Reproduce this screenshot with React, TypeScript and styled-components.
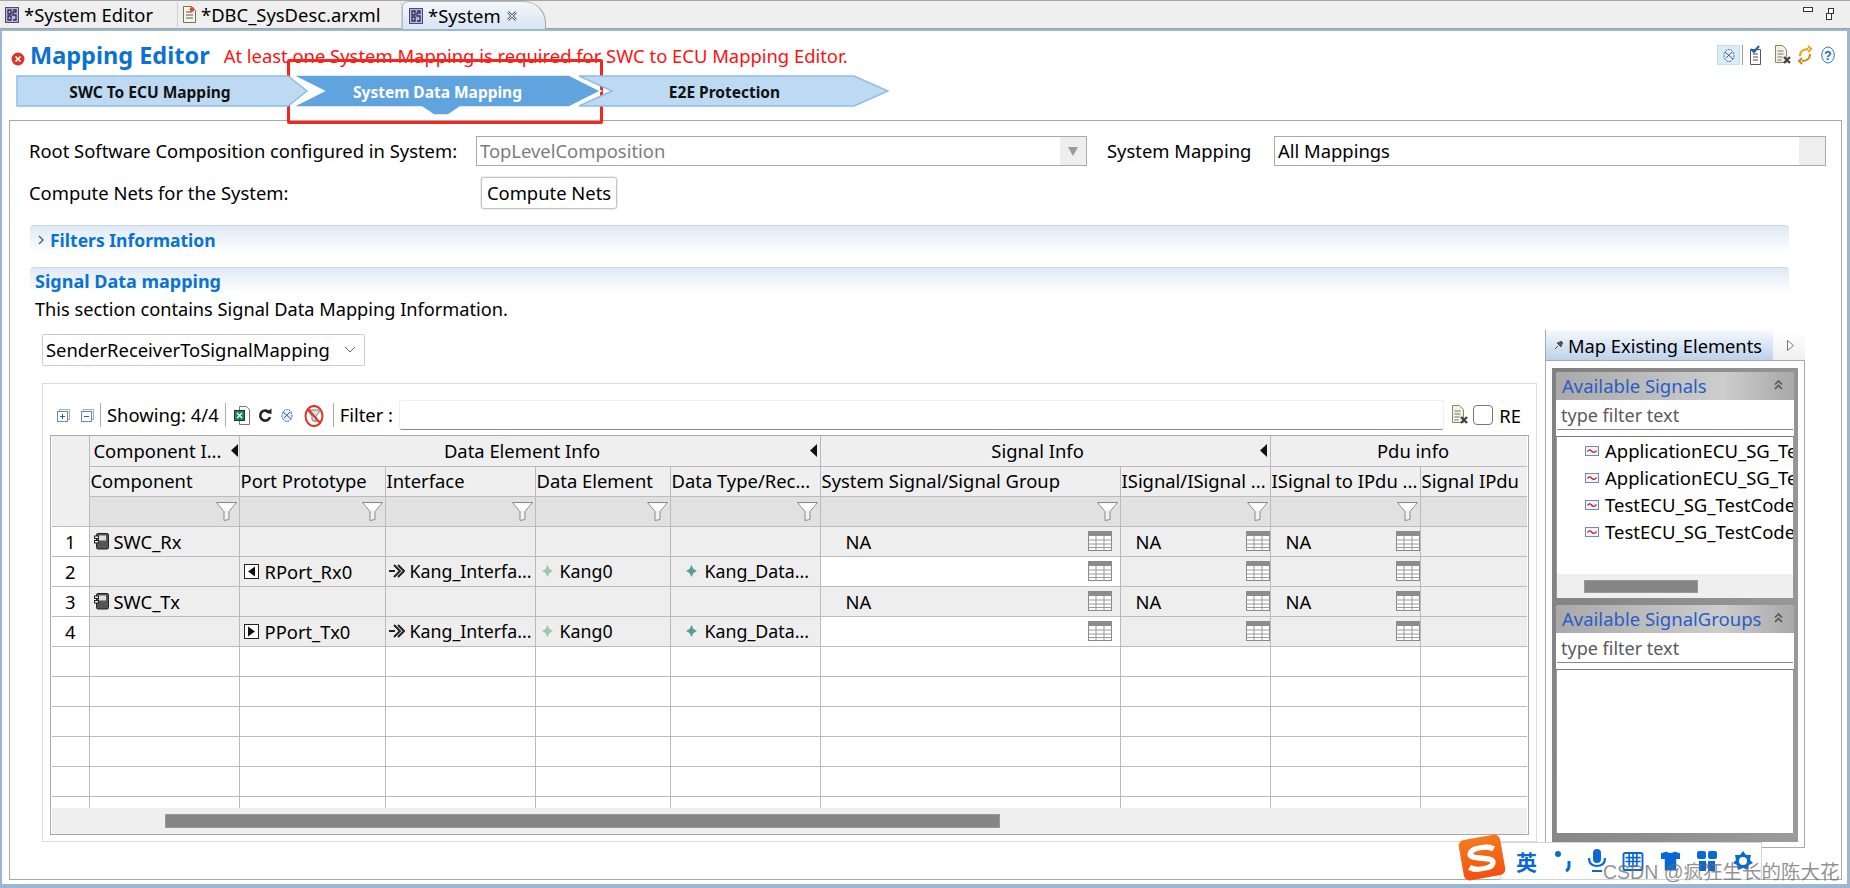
import React from "react";
import styled, { createGlobalStyle } from "styled-components";

const Global = createGlobalStyle`
  html, body { margin: 0; padding: 0; background: #fff; }
  body { font-family: "Noto Sans", "Open Sans", "Liberation Sans", "Noto Sans CJK SC", sans-serif; font-size: 18.4px; color: #000; }
  * { box-sizing: border-box; }
`;

const Page = styled.div`
  position: relative; width: 1850px; height: 888px; overflow: hidden; display: flex; flex-direction: column; background: #fff;
`;
const TabBar = styled.div`
  height: 29px; flex: none; display: flex; background: #efefef; border-top: 1px solid #a8a8a8; position: relative;
`;
const Tab = styled.div<{ $w: number; $active?: boolean }>`
  width: ${p => p.$w}px; height: 28px; display: flex; align-items: center; gap: 5px; padding-left: ${p => p.$active ? 6 : 5}px;
  white-space: nowrap; line-height: 28px;
  ${p => p.$active ? `
    background: linear-gradient(#f4f7fb, #d6e4f2);
    border-radius: 6px 22px 0 0;
    border-top: 1px solid #b9b9b9; border-left: 1px solid #b9b9b9; border-right: 1px solid #a8a8a8;
  ` : `border-right: 1px solid #d0d0d0; border-radius: 0 4px 0 0; border-bottom: 1px solid #a0a0a0;`}
`;
const TabSpacer = styled.div`
  flex: 1; border-bottom: 1px solid #a0a0a0; height: 28px; display: flex; justify-content: flex-end; align-items: flex-start; gap: 13px; padding: 6px 16px 0 0;
`;
const Editor = styled.div`
  flex: 1; min-height: 0; display: flex; flex-direction: column; border-top: 2px solid #9ab8d6; border-left: 2px solid #9ab8d6; border-right: 3px solid #9ab8d6; border-bottom: 4px solid #9ab8d6;
`;
const TitleRow = styled.div`
  height: 44px; flex: none; display: flex; align-items: center; padding: 4px 12px 0 9px;
`;
const Title = styled.div`
  font-size: 23.5px; font-weight: 700; color: #0a73cf; margin-left: 5px; white-space: nowrap;
`;
const ErrorText = styled.div`
  color: #ff1010; margin-left: 14px; white-space: nowrap;
`;
const HeadTools = styled.div`
  margin-left: auto; display: flex; align-items: center;
`;
const ToolToggle = styled.div`
  width: 23px; height: 20px; background: #dcebf8; border: 1px solid #c4dcf0; display: flex; align-items: center; justify-content: center;
`;
const ToolSep = styled.div`
  width: 1px; height: 20px; background: #999; margin-left: 2px;
`;
const Steps = styled.div`
  height: 45px; flex: none; padding-left: 14px; display: flex; align-items: flex-start;
`;
const Step = styled.div<{ $w: number; $ml?: number; $pr: number; $active?: boolean; $z: number }>`
  position: relative; z-index: ${p => p.$z}; width: ${p => p.$w}px; height: 32px; margin-left: ${p => p.$ml ?? 0}px; padding-right: ${p => p.$pr}px; padding-top: 2px;
  display: flex; align-items: center; justify-content: center; font-size: 15.5px; font-weight: 700;
  color: ${p => p.$active ? "#fff" : "#111"};
  svg { position: absolute; left: 0; top: 0; overflow: visible; }
  span { position: relative; }
`;
const Panel = styled.div`
  flex: 1; min-height: 0; margin: 0 5px 4px 7px; border: 1px solid #aaa; padding-top: 15px; display: flex; flex-direction: column;
`;
const FormRow = styled.div<{ $mt?: number }>`
  display: flex; align-items: center; padding: 0 15px 0 19px; margin-top: ${p => p.$mt ?? 0}px; flex: none;
`;
const FormLabel = styled.div<{ $w?: number; $ml?: number }>`
  width: ${p => p.$w ? `${p.$w}px` : "auto"}; margin-left: ${p => p.$ml ?? 0}px; white-space: nowrap; flex: none; padding-bottom: 2px;
`;
const Combo = styled.div<{ $w?: number; $disabled?: boolean }>`
  width: ${p => p.$w ? `${p.$w}px` : "auto"}; flex: ${p => p.$w ? "none" : 1}; height: 30px; border: 1px solid #aaa; display: flex; align-items: center; justify-content: space-between; padding-left: 3px;
  color: ${p => p.$disabled ? "#7d7d7d" : "#000"};
  > span { padding-bottom: 2px; }
`;
const ComboBtn = styled.div`
  width: 26px; height: 28px; background: #eee; display: flex; align-items: center; justify-content: center;
`;
const Button = styled.div`
  width: 136px; height: 32px; border: 1px solid #c4c4c4; border-radius: 3px; background: #fff; box-shadow: 0 0 0 1px #eee; display: flex; align-items: center; justify-content: center; margin-left: 1px; padding-bottom: 2px;
`;
const SectionHead = styled.div<{ $mt: number; $h: number }>`
  margin: ${p => p.$mt}px 52px 0 20px; height: ${p => p.$h}px; flex: none; padding: 2px 0 0 ${p => p.$h === 27 ? 8 : 5}px; display: flex; align-items: center; gap: 6px;
  font-weight: 700; font-size: ${p => p.$h === 27 ? 17.5 : 18}px; color: #0a73cf; border-top: 1px solid #c9d8e8; border-radius: 4px 4px 0 0;
  background: linear-gradient(#dfe9f4, #fdfeff);
`;
const Desc = styled.div`
  height: 38px; flex: none; padding-left: 25px; display: flex; align-items: center; padding-bottom: 4px; font-size: 18.2px;
`;
const Body = styled.div`
  display: flex; gap: 8px; padding-left: 32px; flex: none;
`;
const LeftCol = styled.div`
  width: 1495px; padding-top: 4px; flex: none;
`;
const SelectBox = styled.div`
  width: 323px; height: 32px; border: 1px solid #ccc; border-radius: 2px; display: flex; align-items: center; justify-content: space-between; padding: 0 8px 2px 3px; white-space: nowrap;
`;
const TablePanel = styled.div`
  margin-top: 17px; height: 459px; border: 1px solid #ddd; display: flex; flex-direction: column;
`;
const Toolbar = styled.div`
  margin-top: 16px; height: 30px; display: flex; align-items: center; padding: 0 15px 0 14px; flex: none;
`;
const TI = styled.div<{ $ml?: number; $w?: number; $text?: boolean }>`
  margin-left: ${p => p.$ml ?? 0}px; ${p => p.$w ? `width:${p.$w}px;` : ""} flex: none; display: flex; align-items: center; white-space: nowrap;
  ${p => p.$text ? "padding-bottom: 2px;" : ""}
`;
const VSep = styled.div<{ $ml: number }>`
  width: 1px; height: 24px; background: #aaa; margin-left: ${p => p.$ml}px; flex: none;
`;
const FilterInput = styled.div`
  flex: 1; height: 30px; margin-left: 6px; border: 1px solid #eee; border-bottom: 1px solid #888; border-radius: 3px;
`;
const CheckBox = styled.div`
  width: 20px; height: 20px; border: 1px solid #777; border-radius: 4px; background: #fff;
`;
const GridFrame = styled.div`
  margin: 5px 7px 0 7px; height: 400px; border: 1px solid #aaa; padding: 0 1px 1px 1px; display: flex; flex-direction: column; background: #fff;
`;
const GridClip = styled.div`
  height: 372px; flex: none; overflow: hidden;
`;
const Grid = styled.table`
  border-collapse: collapse; table-layout: fixed; width: 1475px;
  td, th { border: 1px solid #bbb; padding: 0; font-weight: 400; height: 30px; overflow: hidden; white-space: nowrap; }
  tr:first-child td, tr:first-child th { border-top: 0; }
  td:first-child, th:first-child { border-left: 0; }
`;
const Corner = styled.th`
  background: #efefef;
`;
const GroupHead = styled.th`
  background: #efefef;
`;
const GroupInner = styled.div<{ $left?: boolean; $pl?: number; $pr?: number }>`
  display: flex; align-items: center; padding: 0 ${p => p.$pr ?? 2}px 0 ${p => p.$pl ?? 5}px; height: 29px;
  span { flex: 1; text-align: ${p => p.$left ? "left" : "center"}; }
`;
const ColHead = styled.th`
  background: #efefef; text-align: left; padding: 0 0 2px 1px !important;
`;
const FilterCell = styled.td`
  background: #e1e1e1; text-align: right; padding-right: 2px !important; line-height: 0;
`;
const Cell = styled.td<{ $white?: boolean }>`
  background: ${p => p.$white ? "#fff" : "#eee"};
`;
const EmptyCell = styled.td`
  background: #fff;
`;
const RowNum = styled.td`
  background: #fff; text-align: center;
`;
const CellInner = styled.div<{ $pl: number; $gap?: number; $fs?: number }>`
  display: flex; align-items: center; padding-left: ${p => p.$pl}px; gap: ${p => p.$gap ?? 5}px; height: 29px;
  ${p => p.$fs ? `font-size: ${p.$fs}px;` : ""}
  svg { flex: none; }
`;
const LookupCell = styled.div<{ $pl: number; $pr: number }>`
  display: flex; align-items: center; justify-content: space-between; padding: 0 ${p => p.$pr}px 0 ${p => p.$pl}px; height: 29px;
`;
const ScrollTrack = styled.div<{ $pl: number; $h: number; $tw: number; $th: number }>`
  height: ${p => p.$h}px; flex: none; background: #efefef; padding-left: ${p => p.$pl}px; display: flex; align-items: center;
  &::before { content: ""; width: ${p => p.$tw}px; height: ${p => p.$th}px; background: #858585; border: 1px solid #999; }
`;
const RightCol = styled.div`
  width: 260px; flex: none; display: flex; flex-direction: column;
`;
const PaneTabs = styled.div`
  height: 31px; flex: none; display: flex; border-left: 1px solid #aaa; border-bottom: 1px solid #aaa;
`;
const PaneTab = styled.div`
  width: 227px; display: flex; align-items: center; gap: 4px; padding-left: 8px; white-space: nowrap; font-size: 18.3px;
  background: linear-gradient(#f6f9fd, #bcd2ea);
`;
const PaneTabRest = styled.div`
  flex: 1; display: flex; align-items: center; justify-content: center; padding-left: 2px; background: linear-gradient(#fff, #efefef);
`;
const PaneBody = styled.div`
  height: 487px; flex: none; border: 1px solid #aaa; border-top: 0; padding: 7px 6px 6px 6px;
`;
const Frame = styled.div`
  height: 474px; background: linear-gradient(100deg, #808080, #9b9b9b); padding: 4px 4px 9px 4px; display: flex; flex-direction: column; gap: 7px;
`;
const Section = styled.div<{ $h: number }>`
  height: ${p => p.$h}px; flex: none; background: #fff; display: flex; flex-direction: column; border-radius: 4px 4px 0 0;
`;
const SecHead = styled.div`
  height: 28px; flex: none; display: flex; align-items: center; justify-content: space-between; padding: 0 11px 2px 6px; color: #2a5cc6; font-size: 18.5px;
  background: linear-gradient(90deg, #a9a9a9, #cdcdcd 70%, #a8a8a8); border-radius: 4px 4px 0 0; white-space: nowrap;
`;
const SecFilter = styled.div`
  height: 30px; flex: none; padding: 0 1px; color: #5a5a5a;
  div { height: 30px; display: flex; align-items: center; padding-left: 4px; border-bottom: 1px solid #888; font-size: 18px; }
`;
const TreeBox = styled.div`
  flex: 1; min-height: 0; margin-top: 6px; border-top: 1px solid #777; border-left: 1px solid #999; border-right: 1px solid #999; display: flex; flex-direction: column; overflow: hidden;
`;
const Tree = styled.div`
  flex: 1; overflow: hidden;
`;
const TreeItem = styled.div`
  height: 27px; display: flex; align-items: center; gap: 6px; padding-left: 28px; white-space: nowrap; font-size: 18.5px;
  svg { flex: none; }
`;
const Annotation = styled.div`
  position: absolute; left: 287px; top: 59px; width: 316px; height: 65px; border: 3px solid #f5261c; border-radius: 2px; pointer-events: none;
`;
const Ime = styled.div`
  position: absolute; left: 1500px; top: 842px; width: 262px; height: 38px; background: #fff; border: 1px solid #c9d8e8; display: flex; align-items: center; padding-left: 15px;
`;
const ImeLogo = styled.div`
  position: absolute; left: 1461px; top: 837px; width: 42px; height: 41px; transform: rotate(-10deg); border-radius: 6px;
  background: linear-gradient(#f47a1f, #f4500f); display: flex; align-items: center; justify-content: center;
`;
const ImeChar = styled.div`
  font-family: "Noto Sans CJK SC", sans-serif; font-weight: 700; font-size: 21px; color: #0a68d4; width: 24px; margin-right: 15px; line-height: 1;
`;
const ImeIcons = styled.div`
  display: flex; align-items: center; gap: 16px;
`;
const Watermark = styled.div`
  position: absolute; left: 1603px; top: 856px; font-family: "Liberation Sans", "Noto Sans CJK SC", sans-serif; font-size: 19.5px; color: rgba(110,110,110,.75); white-space: nowrap;
`;

const EditorIcon = () => (
  <svg width="14" height="16" viewBox="0 0 14 16"><rect x=".5" y=".5" width="13" height="15" fill="#b9b6e0" stroke="#4b4b6a" /><path d="M3 3h3v4H3zM8 3h3v2H8v3h3v5H8M3 9h3v4H3z" fill="none" stroke="#2e2e55" strokeWidth="1.3" /></svg>
);
const ArxmlIcon = () => (
  <svg width="13" height="17" viewBox="0 0 13 17"><path d="M.5.5h8l4 4v12H.5z" fill="#fbf6e4" stroke="#77705a" /><path d="M3 6h6M3 9h7M3 12h7" stroke="#556" /><circle cx="9" cy="3.5" r="2.4" fill="#e04a3a" /></svg>
);
const CloseX = () => (
  <svg width="12" height="12" viewBox="0 0 12 12"><path d="M2 2l8 8M10 2l-8 8" stroke="#666" strokeWidth="2.6" /><path d="M2 2l8 8M10 2l-8 8" stroke="#eee" strokeWidth="1" /></svg>
);
const ErrIcon = () => (
  <svg width="14" height="14" viewBox="0 0 14 14" style={{ marginTop: 8 }}><circle cx="7" cy="7" r="6.5" fill="#d9362b" /><path d="M4.5 4.5l5 5M9.500 4.500l-5 5" stroke="#fff" strokeWidth="1.6" /></svg>
);
const Wand = () => (
  <svg width="12" height="15" viewBox="0 0 12 15"><ellipse cx="6" cy="7.500" rx="5" ry="6" fill="#e6eef6" stroke="#33608c" strokeDasharray="2 1" /><path d="M2 4l8 7M3 10l6-6" stroke="#33608c" /></svg>
);
const CheckDoc = () => (
  <svg width="15" height="20" viewBox="0 0 15 20"><path d="M2.500 4.500h10v15h-10z" fill="#fff" stroke="#556" /><path d="M5 9h5M5 12h5M5 15h5" stroke="#447" /><path d="M3 4l3 3 5-6" fill="none" stroke="#1b5fa8" strokeWidth="2" /></svg>
);
const DocX = () => (
  <svg width="17" height="20" viewBox="0 0 17 20"><path d="M.5.5h7l4 4v13H.5z" fill="#f8f0d8" stroke="#8c8566" /><path d="M2.500 6h6M2.500 9h6M2.500 12h5M2.500 15h4" stroke="#5b7aa0" /><path d="M9 12l6 6M15 12l-6 6" stroke="#444" strokeWidth="2.4" /></svg>
);
const Sync = () => (
  <svg width="16" height="20" viewBox="0 0 16 20"><path d="M3 11c0-5 4-7 8-7M11 1l3 3-3 3" fill="none" stroke="#e8a514" strokeWidth="2" /><path d="M13 9c0 5-4 7-8 7M5 13l-3 3 3 3" fill="none" stroke="#c98a10" strokeWidth="2" /></svg>
);
const Help = () => (
  <svg width="14" height="18" viewBox="0 0 14 18"><ellipse cx="7" cy="9" rx="6.300" ry="8" fill="#eef5fb" stroke="#3c7ab4" /><text x="7" y="13.500" fontSize="12" fontWeight="700" textAnchor="middle" fill="#2a6aa5" fontFamily="Liberation Sans">?</text></svg>
);
const MinIcon = () => (
  <svg width="10" height="6" viewBox="0 0 10 6"><rect x=".5" y=".5" width="9" height="4" fill="#fff" stroke="#333" /></svg>
);
const RestoreIcon = () => (
  <svg width="8" height="12" viewBox="0 0 8 12" style={{ marginTop: 1 }}><rect x="2.500" y=".5" width="5" height="5" fill="#fff" stroke="#333" /><rect x=".5" y="5.500" width="5" height="6" fill="#fff" stroke="#333" /></svg>
);
const StepShape = ({ kind }: { kind: "first" | "active" | "last" }) => {
  if (kind === "first") return <svg width="292" height="32"><path d="M1 1H272L291 16L272 31H1Z" fill="#bedaf2" stroke="#8dbde8" strokeWidth="1.500" /></svg>;
  if (kind === "last") return <svg width="311" height="32"><path d="M1 1H276L310 16L276 31H1L34 16Z" fill="#bedaf2" stroke="#8dbde8" strokeWidth="1.500" /></svg>;
  return <svg width="309" height="40"><path d="M0 0H277L309 16L277 32H168L156 40H142L130 32H0L32 16Z" fill="#5fa4df" stroke="#fff" strokeWidth="1.500" /></svg>;
};
const Arrow = () => <svg width="6" height="10" viewBox="0 0 6 10"><path d="M1 1l4 4-4 4" fill="none" stroke="#3a6d9e" strokeWidth="1.500" /></svg>;
const Chevron = () => <svg width="12" height="7" viewBox="0 0 12 7"><path d="M1 1l5 5 5-5" fill="none" stroke="#666" /></svg>;
const DownTri = () => <svg width="12" height="12" viewBox="0 0 12 12"><path d="M1 2h10L6 11z" fill="#9a9a9a" /></svg>;
const Expand = ({ minus }: { minus?: boolean }) => (
  <svg width="13" height="13" viewBox="0 0 13 13"><rect x="2.500" y=".5" width="10" height="10" fill="#eef2f6" stroke="#9fb2c4" /><rect x=".5" y="2.500" width="10" height="10" fill="#fff" stroke="#6f8aa6" /><path d={minus ? "M3 7.500h5" : "M3 7.500h5M5.500 5v5"} stroke="#2d5f8f" /></svg>
);
const Excel = () => (
  <svg width="16" height="19" viewBox="0 0 16 19"><path d="M5.500.5h7l3 3v15h-10z" fill="#fff" stroke="#777" /><rect x=".5" y="4.500" width="10" height="10" fill="#1f8a3c" stroke="#135" /><path d="M3 7l5 5M8 7l-5 5" stroke="#fff" strokeWidth="1.400" /></svg>
);
const Refresh = () => (
  <svg width="14" height="15" viewBox="0 0 14 15"><path d="M11.500 5a5 5 0 1 0 .5 4" fill="none" stroke="#222" strokeWidth="2.600" /><path d="M8 4.500L13.500 6V.5z" fill="#222" /></svg>
);
const NoFilter = () => (
  <svg width="20" height="23" viewBox="0 0 20 23"><path d="M3 6h14l-5 6v6l-4-2v-4z" fill="#ddd" stroke="#777" /><ellipse cx="10" cy="12" rx="8.500" ry="10" fill="none" stroke="#e0342a" strokeWidth="2" /><path d="M4 5l12 14" stroke="#e0342a" strokeWidth="2" /></svg>
);
const Funnel = () => (
  <svg width="21" height="19" viewBox="0 0 21 19"><path d="M.5.5h20l-7.500 9v8l-5 1v-9z" fill="#f1f1f1" stroke="#8a8a8a" /><path d="M2 1.500h17l-6 7H8z" fill="#fff" /></svg>
);
const ColTri = () => <svg width="8" height="13" viewBox="0 0 8 13" style={{ flex: "none", marginLeft: 10 }}><path d="M7 0v13L0 6.500z" fill="#111" /></svg>;
const CompIcon = () => (
  <svg width="15" height="17" viewBox="0 0 15 17"><rect x="2.500" y=".5" width="12" height="15.500" rx="1.500" fill="#555" stroke="#222" /><rect x="5" y="2.500" width="7" height="5" fill="#ddd" /><rect x=".5" y="3" width="4" height="2.500" fill="#eee" stroke="#222" /><rect x=".5" y="7.500" width="4" height="2.500" fill="#eee" stroke="#222" /></svg>
);
const PortIcon = ({ out }: { out?: boolean }) => (
  <svg width="15" height="15" viewBox="0 0 15 15"><rect x=".5" y=".5" width="14" height="14" fill="#fff" stroke="#222" /><path d={out ? "M4 2.500v10l7-5z" : "M11 2.500v10l-7-5z"} fill="#111" /></svg>
);
const IfIcon = () => (
  <svg width="16" height="14" viewBox="0 0 16 14"><path d="M0 7h6" stroke="#222" strokeWidth="2" /><path d="M5 1l6 6-6 6M9 1l6 6-6 6" fill="none" stroke="#222" strokeWidth="2" /></svg>
);
const Diamond = ({ dark }: { dark?: boolean }) => (
  <svg width="11" height="12" viewBox="0 0 11 12"><path d="M5.500 0l2 4 3.500 2-3.500 2-2 4-2-4L0 6l3.500-2z" fill={dark ? "#5c9a96" : "#9cc7b4"} /></svg>
);
const Lookup = () => (
  <svg width="24" height="20" viewBox="0 0 24 20"><rect x=".5" y=".5" width="23" height="19" fill="#fff" stroke="#888" /><rect x="0" y="0" width="24" height="5" fill="#8c8c8c" /><path d="M0 9h24M0 13h24M0 16.500h24M8 5v15M16 5v15" stroke="#999" /></svg>
);
const Pin = () => (
  <svg width="10" height="10" viewBox="0 0 10 10"><path d="M1 9l3-3M3 3l4 4 1-3 1-1-2-2-1 1z" fill="#555" stroke="#555" /></svg>
);
const RightTri = () => <svg width="7" height="11" viewBox="0 0 7 11"><path d="M.5.5l6 5-6 5z" fill="#fff" stroke="#777" /></svg>;
const Collapse = () => <svg width="9" height="10" viewBox="0 0 9 10"><path d="M1 4.500L4.500 1 8 4.500M1 9l3.500-3.500L8 9" fill="none" stroke="#555" strokeWidth="1.600" /></svg>;
const SignalIcon = () => (
  <svg width="14" height="10" viewBox="0 0 14 10"><rect x=".5" y=".5" width="13" height="9" fill="#eef2fa" stroke="#7a86aa" /><path d="M2.500 5.500c2-3 3.500-1 4.500 0s3 1.500 4.500-1" fill="none" stroke="#c01818" strokeWidth="1.300" /></svg>
);
const Mic = () => <svg width="18" height="24" viewBox="0 0 18 24"><rect x="5" y="0" width="8" height="14" rx="4" fill="#0a68d4" /><path d="M1 9c0 6 3 8 8 8s8-2 8-8M4 22h10" fill="none" stroke="#0a68d4" strokeWidth="2.200" /></svg>;
const Keyboard = () => <svg width="22" height="19" viewBox="0 0 22 20"><rect x="1" y="1" width="20" height="18" rx="2" fill="#fff" stroke="#0a68d4" strokeWidth="2" /><path d="M3 6h16M3 10h16M7 2v12M11 2v12M15 2v12M6 15h10" stroke="#0a68d4" strokeWidth="1.800" /></svg>;
const Shirt = () => <svg width="21" height="20" viewBox="0 0 22 20"><path d="M1 2l6-2c1 2 7 2 8 0l6 2v6h-4v12H5V8H1z" fill="#0a68d4" /></svg>;
const Gift = () => <svg width="20" height="20" viewBox="0 0 20 20"><rect x="0" y="0" width="9" height="8" rx="2" fill="#0a68d4" /><rect x="11" y="0" width="9" height="8" rx="2" fill="#0a68d4" /><rect x="2" y="10" width="7" height="10" fill="#0a68d4" /><rect x="11" y="10" width="7" height="10" fill="#0a68d4" /></svg>;
const ImeGear = () => <svg width="20" height="20" viewBox="0 0 20 20"><path d="M10 0l3 4h5l-1 5 3 3-4 2-1 5-5-2-5 2-1-5-4-2 3-3-1-5h5z" fill="#0a68d4" /><circle cx="10" cy="10" r="4" fill="#fff" /></svg>;
const ImeDots = () => <svg width="17" height="24" viewBox="0 0 17 24"><circle cx="3" cy="5" r="3" fill="#0a68d4" /><path d="M14 12v5c0 2-1 4-3 5" fill="none" stroke="#0a68d4" strokeWidth="3" /></svg>;
const SogouS = () => <svg width="34" height="26" viewBox="0 0 34 26"><path d="M30 6C24 1 8 1 6 7s22 6 21 12S10 26 3 20" fill="none" stroke="#fff" strokeWidth="5.500" /></svg>;

const FilterRow = () => (
  <tr>
    {[0, 1, 2, 3, 4, 5, 6, 7].map(i => <FilterCell key={i}><Funnel /></FilterCell>)}
    <FilterCell />
  </tr>
);

const Row = ({ n, name, port, out }: { n: number; name?: string; port?: string; out?: boolean }) => (
  <tr>
    <RowNum>{n}</RowNum>
    <Cell>{name && <CellInner $pl={4}><CompIcon />{name}</CellInner>}</Cell>
    <Cell>{port && <CellInner $pl={4} $gap={6}><PortIcon out={out} />{port}</CellInner>}</Cell>
    <Cell>{port && <CellInner $pl={3} $fs={17.8}><IfIcon />Kang_Interfa...</CellInner>}</Cell>
    <Cell>{port && <CellInner $pl={6} $gap={7} $fs={17.8}><Diamond />Kang0</CellInner>}</Cell>
    <Cell>{port && <CellInner $pl={15} $gap={8} $fs={17.8}><Diamond dark />Kang_Data...</CellInner>}</Cell>
    <Cell $white={!!port}><LookupCell $pl={25} $pr={8}><span>{name ? "NA" : ""}</span><Lookup /></LookupCell></Cell>
    <Cell><LookupCell $pl={15} $pr={0}><span>{name ? "NA" : ""}</span><Lookup /></LookupCell></Cell>
    <Cell><LookupCell $pl={15} $pr={0}><span>{name ? "NA" : ""}</span><Lookup /></LookupCell></Cell>
    <Cell />
  </tr>
);

const EmptyRow = () => (
  <tr>{Array.from({ length: 10 }).map((_, i) => <EmptyCell key={i} />)}</tr>
);

export default function App() {
  return (
    <Page>
      <Global />
      <TabBar>
        <Tab $w={178}><EditorIcon />*System Editor</Tab>
        <Tab $w={224}><ArxmlIcon />*DBC_SysDesc.arxml</Tab>
        <Tab $w={144} $active><EditorIcon />*System<CloseX /></Tab>
        <TabSpacer><MinIcon /><RestoreIcon /></TabSpacer>
      </TabBar>
      <Editor>
        <TitleRow>
          <ErrIcon />
          <Title>Mapping Editor</Title>
          <ErrorText>At least one System Mapping is required for SWC to ECU Mapping Editor.</ErrorText>
          <HeadTools>
            <ToolToggle><Wand /></ToolToggle>
            <ToolSep />
            <TI $ml={5}><CheckDoc /></TI>
            <TI $ml={12}><DocX /></TI>
            <TI $ml={5}><Sync /></TI>
            <TI $ml={8}><Help /></TI>
          </HeadTools>
        </TitleRow>
        <Steps>
          <Step $w={292} $pr={24} $z={1}><StepShape kind="first" /><span>SWC To ECU Mapping</span></Step>
          <Step $w={309} $ml={-16} $pr={18} $active $z={3}><StepShape kind="active" /><span>System Data Mapping</span></Step>
          <Step $w={311} $ml={-23} $pr={18} $z={2}><StepShape kind="last" /><span>E2E Protection</span></Step>
        </Steps>
        <Panel>
          <FormRow>
            <FormLabel $w={447}>Root Software Composition configured in System:</FormLabel>
            <Combo $w={611} $disabled><span>TopLevelComposition</span><ComboBtn><DownTri /></ComboBtn></Combo>
            <FormLabel $ml={20} $w={167}>System Mapping</FormLabel>
            <Combo><span>All Mappings</span><ComboBtn /></Combo>
          </FormRow>
          <FormRow $mt={11}>
            <FormLabel $w={451}>Compute Nets for the System:</FormLabel>
            <Button>Compute Nets</Button>
          </FormRow>
          <SectionHead $mt={16} $h={27}><Arrow />Filters Information</SectionHead>
          <SectionHead $mt={15} $h={25}>Signal Data mapping</SectionHead>
          <Desc>This section contains Signal Data Mapping Information.</Desc>
          <Body>
            <LeftCol>
              <SelectBox>SenderReceiverToSignalMapping<Chevron /></SelectBox>
              <TablePanel>
                <Toolbar>
                  <TI $w={13}><Expand /></TI>
                  <TI $ml={11} $w={13}><Expand minus /></TI>
                  <TI $w={1} $ml={6}><VSep $ml={0} /></TI>
                  <TI $ml={6} $text>Showing: 4/4</TI>
                  <VSep $ml={6} />
                  <TI $ml={8}><Excel /></TI>
                  <TI $ml={8}><Refresh /></TI>
                  <TI $ml={9}><Wand /></TI>
                  <TI $ml={11}><NoFilter /></TI>
                  <VSep $ml={9} />
                  <TI $ml={6} $text>Filter :</TI>
                  <FilterInput />
                  <TI $ml={8}><DocX /></TI>
                  <TI $ml={4}><CheckBox /></TI>
                  <TI $ml={6}>RE</TI>
                </Toolbar>
                <GridFrame>
                  <GridClip>
                    <Grid>
                      <colgroup>
                        {[37, 150, 146, 150, 135, 150, 300, 150, 150, 107].map((w, i) => <col key={i} style={{ width: w }} />)}
                      </colgroup>
                      <tbody>
                        <tr>
                          <Corner rowSpan={3} />
                          <GroupHead><GroupInner $left $pl={4} $pr={3}><span>Component I...</span><ColTri /></GroupInner></GroupHead>
                          <GroupHead colSpan={4}><GroupInner><span>Data Element Info</span><ColTri /></GroupInner></GroupHead>
                          <GroupHead colSpan={2}><GroupInner><span>Signal Info</span><ColTri /></GroupInner></GroupHead>
                          <GroupHead colSpan={2}><GroupInner $pl={34} $pr={5}><span>Pdu info</span></GroupInner></GroupHead>
                        </tr>
                        <tr>
                          {["Component", "Port Prototype", "Interface", "Data Element", "Data Type/Rec...", "System Signal/Signal Group", "ISignal/ISignal ...", "ISignal to IPdu ...", "Signal IPdu"].map(t => <ColHead key={t}>{t}</ColHead>)}
                        </tr>
                        <FilterRow />
                        <Row n={1} name="SWC_Rx" />
                        <Row n={2} port="RPort_Rx0" />
                        <Row n={3} name="SWC_Tx" />
                        <Row n={4} port="PPort_Tx0" out />
                        <EmptyRow /><EmptyRow /><EmptyRow /><EmptyRow /><EmptyRow /><EmptyRow />
                      </tbody>
                    </Grid>
                  </GridClip>
                  <ScrollTrack $pl={113} $h={26} $tw={833} $th={12} />
                </GridFrame>
              </TablePanel>
            </LeftCol>
            <RightCol>
              <PaneTabs>
                <PaneTab><Pin />Map Existing Elements</PaneTab>
                <PaneTabRest><RightTri /></PaneTabRest>
              </PaneTabs>
              <PaneBody>
                <Frame>
                  <Section $h={226}>
                    <SecHead>Available Signals<Collapse /></SecHead>
                    <SecFilter><div>type filter text</div></SecFilter>
                    <TreeBox>
                      <Tree>
                        <TreeItem><SignalIcon />ApplicationECU_SG_Te</TreeItem>
                        <TreeItem><SignalIcon />ApplicationECU_SG_Te</TreeItem>
                        <TreeItem><SignalIcon />TestECU_SG_TestCode</TreeItem>
                        <TreeItem><SignalIcon />TestECU_SG_TestCode</TreeItem>
                      </Tree>
                      <ScrollTrack $pl={27} $h={24} $tw={112} $th={11} />
                    </TreeBox>
                  </Section>
                  <Section $h={228}>
                    <SecHead>Available SignalGroups<Collapse /></SecHead>
                    <SecFilter><div>type filter text</div></SecFilter>
                    <TreeBox><Tree /></TreeBox>
                  </Section>
                </Frame>
              </PaneBody>
            </RightCol>
          </Body>
        </Panel>
      </Editor>
      <Annotation />
      <Ime>
        <ImeChar>英</ImeChar>
        <ImeIcons><ImeDots /><Mic /><Keyboard /><Shirt /><Gift /><ImeGear /></ImeIcons>
      </Ime>
      <ImeLogo><SogouS /></ImeLogo>
      <Watermark>CSDN @疯狂生长的陈大花</Watermark>
    </Page>
  );
}
